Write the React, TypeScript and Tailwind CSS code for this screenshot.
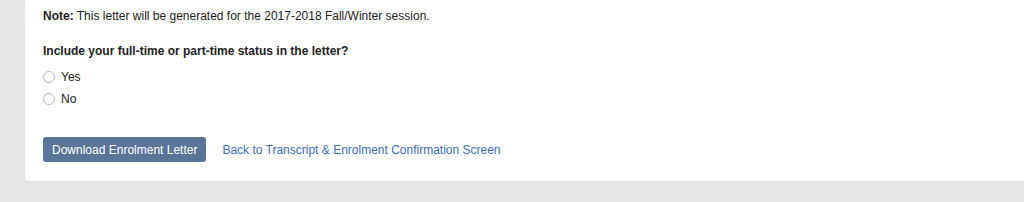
export default function App() {
  return (
    <div className="min-h-[202px] w-full bg-[#e4e4e4] pl-[25px] pb-[21px] font-['Liberation_Sans',Arial,sans-serif] text-[12px] text-[#222]">
      <div className="rounded-bl-[3px] bg-white pl-[18px] pt-[8px] pb-[19px]">
        <p className="leading-[17px]">
          <span className="font-bold">Note:</span> This letter will be generated for the 2017-2018 Fall/Winter session.
        </p>

        <p className="mt-[18px] font-bold leading-[17px]">Include your full-time or part-time status in the letter?</p>

        <div className="mt-[8px] flex flex-col gap-[4px]">
          {["Yes", "No"].map(label => (
            <label key={label} className="flex h-[18px] items-center gap-[6px]">
              <span className="h-[12px] w-[12px] rounded-full border border-[#b9b9b9] bg-white" />
              <span>{label}</span>
            </label>
          ))}
        </div>

        <div className="mt-[29px] flex items-center gap-[16px]">
          <button className="h-[25px] rounded-[3px] bg-[#5a7598] px-[9px] text-[12px] text-white">
            Download Enrolment Letter
          </button>
          <a href="#" className="text-[#3b6cb4]">
            Back to Transcript &amp; Enrolment Confirmation Screen
          </a>
        </div>
      </div>
    </div>
  );
}
